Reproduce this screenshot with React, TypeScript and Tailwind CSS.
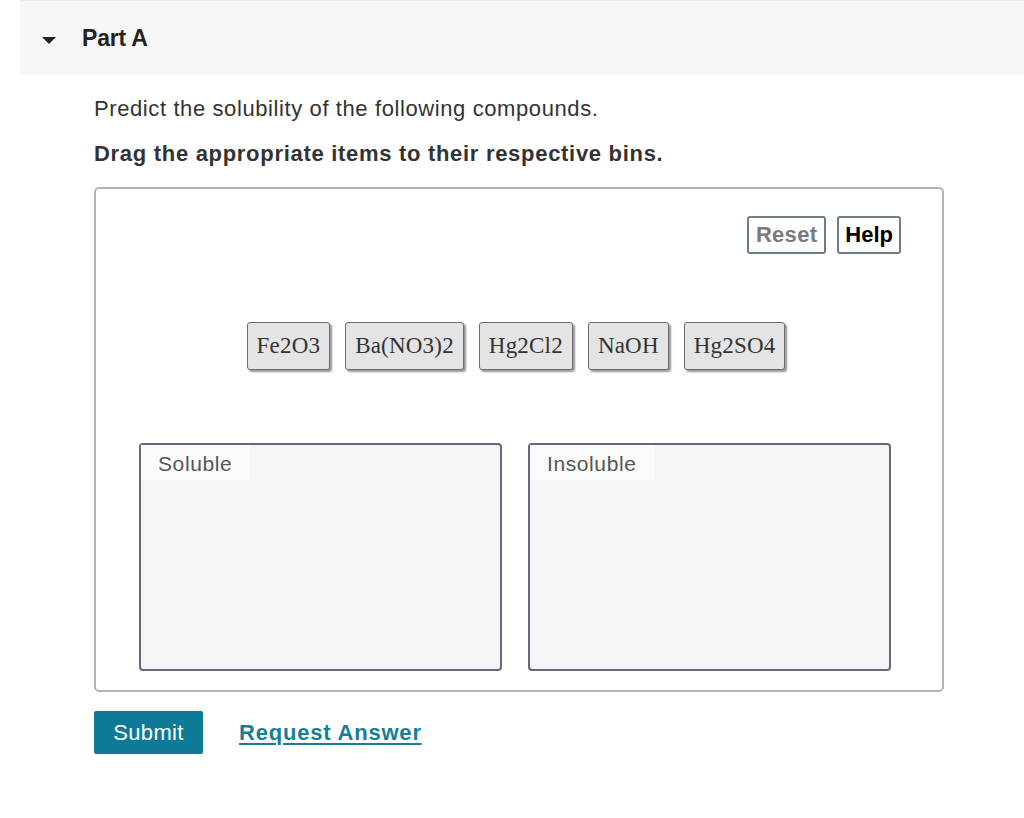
const items = ['Fe2O3', 'Ba(NO3)2', 'Hg2Cl2', 'NaOH', 'Hg2SO4']

const Bin = ({ label }: { label: string }) => (
  <div className="w-[363px] h-[228px] rounded-[4px] border-2 border-[#65687c] bg-[#f5f5f5]">
    <div className="inline-block bg-[#fbfbfb] pl-[17px] pr-[18px] h-[35px] leading-[37px] text-[21px] text-[#555] tracking-[0.6px]">
      {label}
    </div>
  </div>
)

const App = () => {
  return (
    <div className="min-h-[818px] bg-white font-['Liberation_Sans',Arial,sans-serif] text-[#333]">
      {/* section header */}
      <div className="ml-[20px] h-[75px] bg-[#f7f7f7] border-t border-[#ececec] flex items-center">
        <svg width="14" height="8" viewBox="0 0 14 8" className="ml-[22px] mt-[6px]">
          <path d="M0 0 L14 0 L7 7 Z" fill="#222" />
        </svg>
        <span className="ml-[26px] text-[23px] font-bold text-[#222] tracking-[-0.2px]">Part A</span>
      </div>

      <div className="pl-[94px]">
        <p className="mt-[19px] text-[22px] leading-[30px] tracking-[0.6px]">
          Predict the solubility of the following compounds.
        </p>
        <p className="mt-[15px] text-[22px] leading-[30px] font-bold tracking-[0.7px]">
          Drag the appropriate items to their respective bins.
        </p>

        {/* drag and drop area */}
        <div className="mt-[18px] w-[850px] h-[505px] rounded-[5px] border-2 border-[#b4b4b4] flex flex-col">
          <div className="flex justify-end gap-[11px] pr-[41px] pt-[27px]">
            <button className="h-[38px] px-[7px] border-2 border-[#6e7f84] rounded-[3px] text-[22px] font-bold text-[#7a7a7a] leading-none tracking-[0.3px]">
              Reset
            </button>
            <button className="h-[38px] px-[6px] border-2 border-[#6e7f84] rounded-[3px] text-[22px] font-bold text-black leading-none">
              Help
            </button>
          </div>

          <div className="mt-[68px] flex justify-center gap-[15px] pr-[6px]">
            {items.map((it) => (
              <div
                key={it}
                className="h-[48px] px-[9px] flex items-center bg-[#e4e4e4] border-[1.5px] border-[#6d6d6d] rounded-[3px] shadow-[2px_2px_2px_rgba(60,60,80,0.55)] font-['Liberation_Serif','Times_New_Roman',serif] text-[23px] text-[#333] tracking-[0.2px]"
              >
                {it}
              </div>
            ))}
          </div>

          <div className="mt-auto mb-[19px] ml-[43px] flex gap-[26px]">
            <Bin label="Soluble" />
            <Bin label="Insoluble" />
          </div>
        </div>

        <div className="mt-[19px] flex items-center gap-[36px]">
          <button className="w-[109px] h-[43px] rounded-[2px] bg-[#0d7b98] text-white text-[22px] tracking-[0.3px]">
            Submit
          </button>
          <a href="#" className="text-[22px] font-bold text-[#1a7c99] underline underline-offset-[3px] decoration-2 tracking-[0.8px]">
            Request Answer
          </a>
        </div>
      </div>
    </div>
  )
}

export default App
